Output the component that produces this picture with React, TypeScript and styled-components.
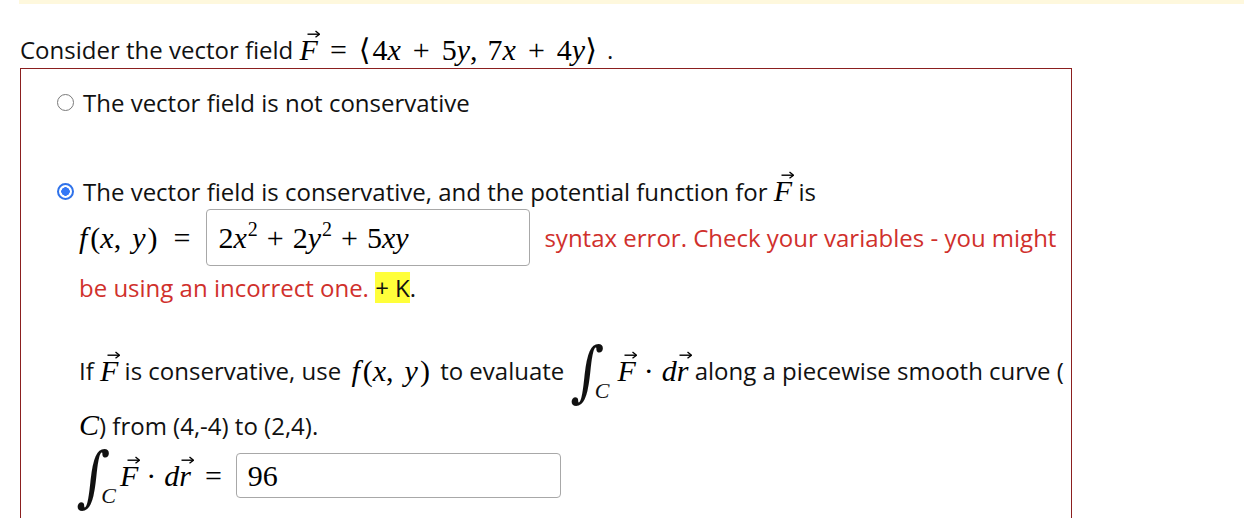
import React from 'react';
import styled, { createGlobalStyle } from 'styled-components';

const Global = createGlobalStyle`
  body {
    margin: 0;
    background: #fff;
    font-family: 'Open Sans', 'Noto Sans', sans-serif;
    font-size: 24px;
    color: #111;
  }
`;

const TopBand = styled.div`
  height: 4px;
  margin-left: 19px;
  background: #fef8dd;
`;

const Page = styled.div`
  padding-left: 20px;
`;

const Prompt = styled.div`
  margin-top: 31px;
  height: 30px;
  line-height: 30px;
  display: flex;
  align-items: center;
  white-space: nowrap;
`;

const AnswerBox = styled.div`
  margin-top: 3px;
  width: 1052px;
  height: 460px;
  box-sizing: border-box;
  border: 1px solid #8b1f1f;
  border-bottom: none;
  padding-left: 36px;
`;

const Row = styled.div<{ $top: number; $h?: number; $indent?: number }>`
  display: flex;
  align-items: center;
  white-space: nowrap;
  margin-top: ${p => p.$top}px;
  height: ${p => p.$h ?? 30}px;
  padding-left: ${p => p.$indent ?? 0}px;
`;

const Radio = styled.span<{ $checked?: boolean }>`
  width: 17px;
  height: 17px;
  box-sizing: border-box;
  border-radius: 50%;
  margin-right: 9px;
  flex: none;
  border: ${p => (p.$checked ? '2px solid #2f72ea' : '1.5px solid #7a7a7a')};
  background: ${p => (p.$checked ? 'radial-gradient(circle, #3478f6 0 4px, #fff 4.5px)' : '#fff')};
`;

const Math = styled.span`
  font-family: 'Liberation Serif', 'DejaVu Serif', serif;
  font-size: 30px;
  line-height: 34px;
  display: inline-block;
  white-space: nowrap;
  color: #000;
`;

const V = styled.span`
  font-style: italic;
`;

const Op = styled.span<{ $m?: number }>`
  margin: 0 ${p => p.$m ?? 9}px;
`;

const Sup = styled.sup`
  font-size: 20px;
  vertical-align: 12px;
  line-height: 0;
  margin-left: 1px;
`;

const VecWrap = styled.span`
  position: relative;
  font-style: italic;
  display: inline-block;
`;

const Arrow = styled.svg<{ $left: number }>`
  position: absolute;
  left: ${p => p.$left}px;
  top: -3px;
  width: 13px;
  height: 8px;
`;

const Vec = ({ ch, left = 7 }: { ch: string; left?: number }) => (
  <VecWrap>
    {ch}
    <Arrow $left={left} viewBox="0 0 13 8">
      <path d="M0.5 4.2 H12" stroke="#000" strokeWidth="1.4" fill="none" />
      <path d="M8.5 1 L12.5 4.2 L8.5 7.2" stroke="#000" strokeWidth="1.4" fill="none" strokeLinejoin="round" />
    </Arrow>
  </VecWrap>
);

const Gap = styled.span<{ $w: number }>`
  display: inline-block;
  width: ${p => p.$w}px;
`;

const Field = styled.div<{ $w: number; $h: number }>`
  width: ${p => p.$w}px;
  height: ${p => p.$h}px;
  box-sizing: border-box;
  border: 1px solid #a8a8a8;
  border-radius: 4px;
  display: flex;
  align-items: center;
  padding-left: 11px;
  flex: none;
`;

const ErrorText = styled.span`
  color: #d0302c;
`;

const Hl = styled.span`
  display: inline-block;
  background: #ffff3a;
  color: #111;
  line-height: 31px;
`;

const IntegralWrap = styled.span`
  display: inline-flex;
  align-items: flex-end;
  height: 65px;
  flex: none;
`;

const IntSign = styled.span`
  font-family: 'DejaVu Serif', serif;
  font-size: 56px;
  line-height: 65px;
  transform: scaleY(1.18) skewX(-6deg);
  display: inline-block;
`;

const IntSub = styled.span`
  font-family: 'Liberation Serif', serif;
  font-style: italic;
  font-size: 22px;
  line-height: 24px;
  margin-left: -7px;
`;

const Integral = () => (
  <IntegralWrap>
    <IntSign>∫</IntSign>
    <IntSub>C</IntSub>
  </IntegralWrap>
);

const Dot = styled.span`
  margin: 0 8px;
`;

const FofXY = () => (
  <>
    <V>f</V>
    <Gap $w={3} />(<V>x</V>,<Gap $w={11} />
    <V>y</V>
    <Gap $w={2} />)
  </>
);

export default function App() {
  return (
    <>
      <Global />
      <TopBand />
      <Page>
        <Prompt>
          Consider the vector field&nbsp;
          <Math>
            <Vec ch="F" />
            <Op $m={12}>=</Op>
            ⟨<Gap $w={2} />4<V>x</V>
            <Op $m={12}>+</Op>5<V>y</V>,<Gap $w={10} />7<V>x</V>
            <Op $m={12}>+</Op>4<V>y</V>⟩
          </Math>
          <Gap $w={10} />.
        </Prompt>
        <AnswerBox>
          <Row $top={18}>
            <Radio />
            The vector field is not conservative
          </Row>
          <Row $top={59}>
            <Radio $checked />
            The vector field is conservative, and the potential function for&nbsp;
            <Math>
              <Vec ch="F" />
            </Math>
            &nbsp;is
          </Row>
          <Row $top={3} $h={57} $indent={22}>
            <Math>
              <FofXY />
              <Op $m={16}>=</Op>
            </Math>
            <Field $w={324} $h={57}>
              <Math>
                2<V>x</V>
                <Sup>2</Sup>
                <Op>+</Op>2<V>y</V>
                <Sup>2</Sup>
                <Op>+</Op>5<V>xy</V>
              </Math>
            </Field>
            <Gap $w={14} />
            <ErrorText>syntax error. Check your variables - you might</ErrorText>
          </Row>
          <Row $top={6} $indent={22}>
            <ErrorText>be using an incorrect one.</ErrorText>&nbsp;<Hl>+ K</Hl>.
          </Row>
          <Row $top={36} $h={65} $indent={22}>
            If&nbsp;
            <Math>
              <Vec ch="F" />
            </Math>
            &nbsp;is conservative, use&nbsp;
            <Math>
              <Gap $w={4} />
              <FofXY />
              <Gap $w={4} />
            </Math>
            &nbsp;to evaluate&nbsp;
            <Gap $w={2} />
            <Integral />
            <Math>
              <Gap $w={8} />
              <Vec ch="F" />
              <Dot>·</Dot>
              <V>d</V>
              <Vec ch="r" left={2} />
            </Math>
            &nbsp;along a piecewise smooth curve (
          </Row>
          <Row $top={7} $indent={22}>
            <Math>
              <V>C</V>
            </Math>
            ) from (4,-4) to (2,4).
          </Row>
          <Row $top={3} $h={65} $indent={22}>
            <Integral />
            <Math>
              <Gap $w={4} />
              <Vec ch="F" />
              <Dot>·</Dot>
              <V>d</V>
              <Vec ch="r" left={2} />
              <Op $m={14}>=</Op>
            </Math>
            <Field $w={325} $h={45}>
              <Math>96</Math>
            </Field>
          </Row>
        </AnswerBox>
      </Page>
    </>
  );
}
